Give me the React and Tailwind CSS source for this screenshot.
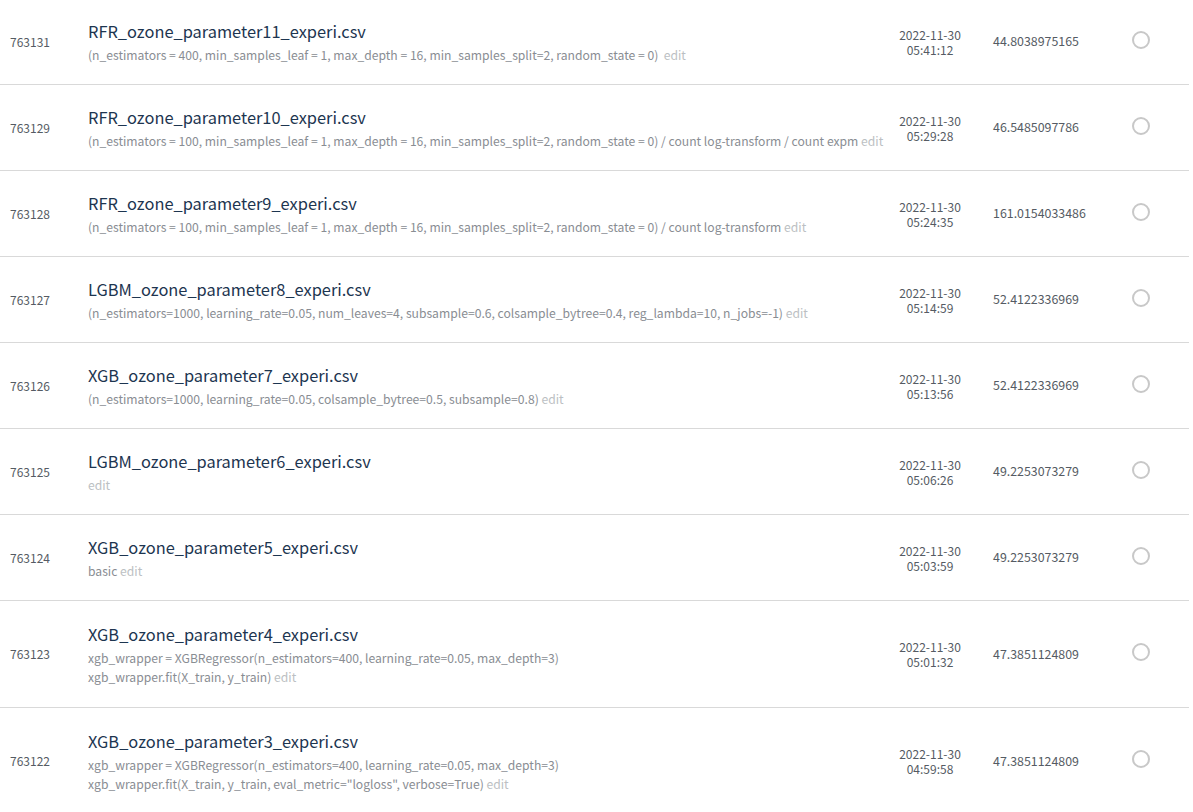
import React from "react";

const rows = [
  {
    id: "763131",
    name: "RFR_ozone_parameter11_experi.csv",
    desc: ["(n_estimators = 400, min_samples_leaf = 1, max_depth = 16, min_samples_split=2, random_state = 0)\u00a0"],
    date: "2022-11-30",
    time: "05:41:12",
    score: "44.8038975165",
  },
  {
    id: "763129",
    name: "RFR_ozone_parameter10_experi.csv",
    desc: ["(n_estimators = 100, min_samples_leaf = 1, max_depth = 16, min_samples_split=2, random_state = 0) / count log-transform / count expm"],
    date: "2022-11-30",
    time: "05:29:28",
    score: "46.5485097786",
  },
  {
    id: "763128",
    name: "RFR_ozone_parameter9_experi.csv",
    desc: ["(n_estimators = 100, min_samples_leaf = 1, max_depth = 16, min_samples_split=2, random_state = 0) / count log-transform"],
    date: "2022-11-30",
    time: "05:24:35",
    score: "161.0154033486",
  },
  {
    id: "763127",
    name: "LGBM_ozone_parameter8_experi.csv",
    desc: ["(n_estimators=1000, learning_rate=0.05, num_leaves=4, subsample=0.6, colsample_bytree=0.4, reg_lambda=10, n_jobs=-1)"],
    date: "2022-11-30",
    time: "05:14:59",
    score: "52.4122336969",
  },
  {
    id: "763126",
    name: "XGB_ozone_parameter7_experi.csv",
    desc: ["(n_estimators=1000, learning_rate=0.05, colsample_bytree=0.5, subsample=0.8)"],
    date: "2022-11-30",
    time: "05:13:56",
    score: "52.4122336969",
  },
  {
    id: "763125",
    name: "LGBM_ozone_parameter6_experi.csv",
    desc: [""],
    date: "2022-11-30",
    time: "05:06:26",
    score: "49.2253073279",
  },
  {
    id: "763124",
    name: "XGB_ozone_parameter5_experi.csv",
    desc: ["basic"],
    date: "2022-11-30",
    time: "05:03:59",
    score: "49.2253073279",
  },
  {
    id: "763123",
    name: "XGB_ozone_parameter4_experi.csv",
    desc: [
      "xgb_wrapper = XGBRegressor(n_estimators=400, learning_rate=0.05, max_depth=3)",
      "xgb_wrapper.fit(X_train, y_train)",
    ],
    date: "2022-11-30",
    time: "05:01:32",
    score: "47.3851124809",
  },
  {
    id: "763122",
    name: "XGB_ozone_parameter3_experi.csv",
    desc: [
      "xgb_wrapper = XGBRegressor(n_estimators=400, learning_rate=0.05, max_depth=3)",
      'xgb_wrapper.fit(X_train, y_train, eval_metric="logloss", verbose=True)',
    ],
    date: "2022-11-30",
    time: "04:59:58",
    score: "47.3851124809",
  },
];

const Row = ({ row }) => {
  const last = row.desc.length - 1;
  return (
    <div
      className={`flex items-center border-b border-[#d9d9d9] ${
        row.desc.length > 1 ? "h-[107px]" : "h-[86px]"
      }`}
    >
      <div className="w-[88px] pl-[10px] text-[12px] text-[#555b63]">{row.id}</div>
      <div className="flex-1 min-w-0">
        <div className="text-[16.4px] leading-[22px] text-[#1d3550]">{row.name}</div>
        <div className="mt-[3px] text-[12.15px] leading-[19px] text-[#898d93]">
          {row.desc.map((line, i) => (
            <div key={i} className="whitespace-nowrap">
              {line}
              {i === last && (
                <span className="text-[#bcbfc3]">{line ? " edit" : "edit"}</span>
              )}
            </div>
          ))}
        </div>
      </div>
      <div className="w-[100px] text-center text-[12px] leading-[15px] text-[#555b63]">
        <div>{row.date}</div>
        <div>{row.time}</div>
      </div>
      <div className="w-[152px] pl-[13px] text-[12.4px] text-[#555b63]">{row.score}</div>
      <div className="mb-[4px] h-[18px] w-[18px] rounded-full border-2 border-[#c8c8c8]" />
      <div className="w-[39px]" />
    </div>
  );
};

export default function App() {
  return (
    <div
      className="h-[812px] w-[1193px] overflow-hidden bg-white"
      style={{ fontFamily: '"Noto Sans CJK KR", "Noto Sans", sans-serif' }}
    >
      <div className="-mt-px w-[1189px]">
        {rows.map((r) => (
          <Row key={r.id} row={r} />
        ))}
      </div>
    </div>
  );
}
